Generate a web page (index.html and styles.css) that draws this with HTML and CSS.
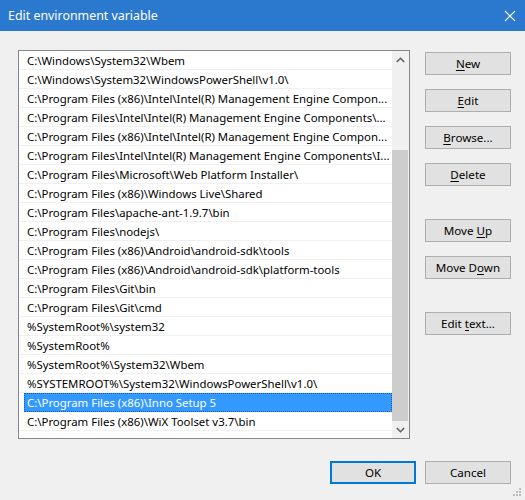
FILE: index.html
```html
<!DOCTYPE html>
<html>
<head>
<meta charset="utf-8">
<link rel="stylesheet" href="styles.css">
</head>
<body>
<div class="window">
  <div class="titlebar">
    <span class="title">Edit environment variable</span>
    <svg class="close" width="12" height="12" viewBox="0 0 12 12"><path d="M1 1L11 11M11 1L1 11" stroke="#fff" stroke-width="1.2" fill="none"/></svg>
  </div>
  <div class="main">
    <div class="listbox">
      <div class="rows">
        <div class="row">C:\Windows\System32\Wbem</div>
        <div class="row">C:\Windows\System32\WindowsPowerShell\v1.0\</div>
        <div class="row">C:\Program Files (x86)\Intel\Intel(R) Management Engine Compon...</div>
        <div class="row">C:\Program Files\Intel\Intel(R) Management Engine Components\...</div>
        <div class="row">C:\Program Files (x86)\Intel\Intel(R) Management Engine Compon...</div>
        <div class="row">C:\Program Files\Intel\Intel(R) Management Engine Components\I...</div>
        <div class="row">C:\Program Files\Microsoft\Web Platform Installer\</div>
        <div class="row">C:\Program Files (x86)\Windows Live\Shared</div>
        <div class="row">C:\Program Files\apache-ant-1.9.7\bin</div>
        <div class="row">C:\Program Files\nodejs\</div>
        <div class="row">C:\Program Files (x86)\Android\android-sdk\tools</div>
        <div class="row">C:\Program Files (x86)\Android\android-sdk\platform-tools</div>
        <div class="row">C:\Program Files\Git\bin</div>
        <div class="row">C:\Program Files\Git\cmd</div>
        <div class="row">%SystemRoot%\system32</div>
        <div class="row">%SystemRoot%</div>
        <div class="row">%SystemRoot%\System32\Wbem</div>
        <div class="row">%SYSTEMROOT%\System32\WindowsPowerShell\v1.0\</div>
        <div class="row selected">C:\Program Files (x86)\Inno Setup 5</div>
        <div class="row">C:\Program Files (x86)\WiX Toolset v3.7\bin</div>
      </div>
      <div class="scrollbar">
        <div class="arrow"><svg width="9" height="6" viewBox="0 0 9 6"><path d="M0.8 5L4.5 1.3L8.2 5" stroke="#606060" stroke-width="1.6" fill="none"/></svg></div>
        <div class="track"><div class="thumb"></div></div>
        <div class="arrow"><svg width="9" height="6" viewBox="0 0 9 6"><path d="M0.8 1L4.5 4.7L8.2 1" stroke="#606060" stroke-width="1.6" fill="none"/></svg></div>
      </div>
    </div>
    <div class="buttons">
      <div class="btn b-new"><span><u>N</u>ew</span></div>
      <div class="btn b-edit"><span><u>E</u>dit</span></div>
      <div class="btn b-browse"><span><u>B</u>rowse...</span></div>
      <div class="btn b-delete"><span><u>D</u>elete</span></div>
      <div class="btn b-up"><span>Move <u>U</u>p</span></div>
      <div class="btn b-down"><span>Move D<u>o</u>wn</span></div>
      <div class="btn b-text"><span>Edit <u>t</u>ext...</span></div>
    </div>
  </div>
  <div class="footer">
    <div class="btn default"><span>OK</span></div>
    <div class="btn"><span>Cancel</span></div>
  </div>
  <svg class="grip" width="10" height="10" viewBox="0 0 10 10">
    <rect x="7" y="1" width="2" height="2" fill="#bcbcbc"/>
    <rect x="4" y="4" width="2" height="2" fill="#bcbcbc"/>
    <rect x="7" y="4" width="2" height="2" fill="#bcbcbc"/>
    <rect x="1" y="7" width="2" height="2" fill="#bcbcbc"/>
    <rect x="4" y="7" width="2" height="2" fill="#bcbcbc"/>
    <rect x="7" y="7" width="2" height="2" fill="#bcbcbc"/>
  </svg>
</div>
</body>
</html>
```
FILE: styles.css
```css
html, body {
  margin: 0;
  padding: 0;
}
body {
  width: 525px;
  height: 500px;
  overflow: hidden;
  background: #f0f0f0;
  font-family: "Noto Sans", "Liberation Sans", sans-serif;
  font-size: 11.4px;
  color: #000;
}
.window {
  position: relative;
  width: 525px;
  height: 500px;
  background: #f0f0f0;
}
.titlebar {
  height: 31px;
  background: #2b79cf;
  display: flex;
  align-items: center;
  justify-content: space-between;
  padding: 0 9px 0 8px;
  color: #fff;
}
.title {
  font-size: 12.4px;
  line-height: 16px;
}
.main {
  display: flex;
  padding: 19px 0 0 18px;
}
.listbox {
  width: 390px;
  height: 387px;
  border: 1px solid #828790;
  background: #fff;
  display: flex;
}
.rows {
  flex: 1;
  overflow: hidden;
}
.row {
  height: 18px;
  border-bottom: 1px solid #f0f0f0;
  line-height: 19px;
  padding-left: 8px;
  white-space: nowrap;
  overflow: hidden;
}
.row.selected {
  background: #3399ff;
  color: #fff;
  margin-left: 5px;
  padding-left: 2px;
  height: 17px;
  border: 1px dotted #1a5ea8;
  line-height: 18px;
}
.scrollbar {
  width: 17px;
  background: #f0f0f0;
  display: flex;
  flex-direction: column;
}
.arrow {
  height: 17px;
  display: flex;
  align-items: center;
  justify-content: center;
}
.track {
  flex: 1;
  display: flex;
  flex-direction: column;
  justify-content: flex-end;
}
.thumb {
  height: 271px;
  background: #cdcdcd;
  margin: 0 1px 0 0;
}
.buttons {
  display: flex;
  flex-direction: column;
  margin-left: 15px;
  padding-top: 2px;
}
.btn {
  box-sizing: border-box;
  width: 86px;
  height: 23px;
  background: #e1e1e1;
  border: 1px solid #adadad;
  display: flex;
  align-items: center;
  justify-content: center;
  line-height: 16px;
  font-size: 11.6px;
}
.btn u {
  text-decoration-thickness: 1px;
  text-underline-offset: 2px;
}
.b-edit, .b-browse, .b-delete { margin-top: 14px; }
.b-up { margin-top: 33px; }
.b-down { margin-top: 14px; }
.b-text { margin-top: 33px; }
.footer {
  display: flex;
  justify-content: flex-end;
  gap: 9px;
  padding: 22px 14px 0 0;
}
.btn.default {
  border: 2px solid #0078d7;
}
.grip {
  position: absolute;
  right: 3px;
  bottom: 3px;
}
```
